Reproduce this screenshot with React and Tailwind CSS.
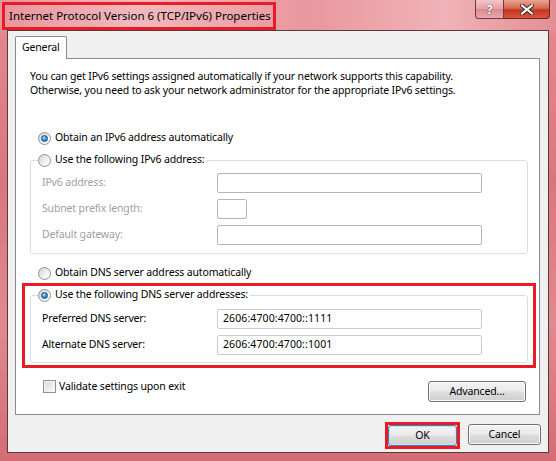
import React from 'react';

const font = { fontFamily: '"Noto Sans", "Liberation Sans", sans-serif' };

const Radio = ({ checked, label, muted }) => (
  <label className="flex items-center h-[14px]">
    <span className="flex items-center justify-center w-[13px] h-[13px] rounded-full border border-[#8e9093] bg-[linear-gradient(135deg,#d4d4d4,#f7f7f7_70%,#ffffff)]">
      {checked && (
        <span className="w-[7px] h-[7px] rounded-full border border-[#1c5180] bg-[radial-gradient(circle_at_40%_35%,#b6e6ff,#2a8ad6_55%,#0f4f8c)]" />
      )}
    </span>
    <span className={`ml-[4px] ${muted ? 'text-[#a0a0a0]' : 'text-black'}`}>{label}</span>
  </label>
);

const Field = ({ label, value, width = 'w-[265px]', disabled }) => (
  <div className="flex items-center h-[20px] ml-[4px]">
    <span className={`w-[175px] ${disabled ? 'text-[#a0a0a0]' : 'text-black'}`}>{label}</span>
    <div className={`${width} h-[20px] rounded-[2px] border ${disabled ? 'border-[#b5b5b5]' : 'border-[#c8cbd0]'} bg-white flex items-center px-[5px] text-black tracking-[0.1px]`}>
      {value}
    </div>
  </div>
);

const Button = ({ children, className = '', primary }) => (
  <button
    className={`h-[21px] rounded-[3px] border ${primary ? 'border-[#3c7fb1] shadow-[inset_0_0_0_1px_#bfe6f8]' : 'border-[#707070] shadow-[inset_0_0_0_1px_#fbfbfb]'} bg-[linear-gradient(#f2f2f2,#ebebeb_48%,#dddddd_52%,#cfcfcf)] text-black flex items-center justify-center ${className}`}
  >
    {children}
  </button>
);

export default function App() {
  return (
    <div
      style={font}
      className="w-[556px] h-[461px] overflow-hidden flex flex-col text-[10.5px] tracking-[-0.15px] bg-[linear-gradient(180deg,#e9a3a9,#e2868d_8%,#d9767d_40%,#df8a90_70%,#d46c73)]"
    >
      {/* title bar */}
      <div className="h-[30px] flex items-start justify-between shrink-0 bg-[linear-gradient(90deg,#e8959c,#f1b9bd_25%,#e8979d_55%,#f0b3b7_80%,#e48d94)]">
        <div className="mt-[2px] ml-[2px] h-[28px] w-[274px] border-[3px] border-[#ea1b25] flex items-center pl-[4px] text-[11.5px] tracking-normal whitespace-nowrap text-black">
          Internet Protocol Version 6 (TCP/IPv6) Properties
        </div>
        <div className="flex mr-[6px]">
          <div className="w-[29px] h-[19px] rounded-bl-[4px] border border-t-0 border-[#6b3c40] bg-[linear-gradient(#f3c5c8,#e3a1a6_50%,#d98a90_51%,#e9a8ad)] flex items-center justify-center">
            <span className="text-white font-bold text-[13px] leading-none [text-shadow:0_0_1px_#3a2a2c,0_0_1px_#3a2a2c]">?</span>
          </div>
          <div className="w-[46px] h-[19px] rounded-br-[4px] border border-l-0 border-t-0 border-[#6b2a24] bg-[linear-gradient(#eaa58f,#d7684f_45%,#c2371f_55%,#d9553c)] flex items-center justify-center">
            <svg width="14" height="11" viewBox="0 0 14 11">
              <path d="M2 1.5 L12 9.5 M12 1.5 L2 9.5" stroke="#3b2b2b" strokeWidth="4" strokeLinecap="square" />
              <path d="M2 1.5 L12 9.5 M12 1.5 L2 9.5" stroke="#ffffff" strokeWidth="2" strokeLinecap="square" />
            </svg>
          </div>
        </div>
      </div>

      {/* client area */}
      <div className="ml-[7px] mr-[7px] h-[423px] border border-[#5b3a3d] bg-[#f0f0f0] flex flex-col px-[7px] pt-[5px]">
        {/* tab */}
        <div className="flex">
          <div className="h-[23px] px-[6px] border border-b-0 border-[#898c95] bg-white flex items-center text-black relative z-10 -mb-[1px] rounded-t-[2px]">
            General
          </div>
        </div>
        <div className="w-[525px] h-[357px] border border-[#898c95] bg-white flex flex-col">
          <div className="ml-[14px] mt-[10px] leading-[14px] text-black">
            <p>You can get IPv6 settings assigned automatically if your network supports this capability.</p>
            <p>Otherwise, you need to ask your network administrator for the appropriate IPv6 settings.</p>
          </div>

          <div className="ml-[22px] mt-[34px]">
            <Radio checked label="Obtain an IPv6 address automatically" />
          </div>

          <fieldset className="block ml-[14px] mt-[8px] w-[498px] border border-[#d5dfe5] rounded-[3px] pl-[7px] pr-0 pb-[8px]">
            <legend className="pr-[2px]">
              <Radio label="Use the following IPv6 address:" />
            </legend>
            <div className="mt-[6px] flex flex-col gap-[6px]">
              <Field disabled label="IPv6 address:" />
              <Field disabled label="Subnet prefix length:" width="w-[30px]" />
              <Field disabled label="Default gateway:" />
            </div>
          </fieldset>

          <div className="ml-[22px] mt-[12px]">
            <Radio label="Obtain DNS server address automatically" />
          </div>

          <div className="ml-[6px] mt-[3px] w-[514px] border-[3px] border-[#ea1b25] px-[5px] pt-[2px] pb-[2px]">
            <fieldset className="block border border-[#d5dfe5] rounded-[3px] pl-[7px] pr-0 pb-[7px]">
              <legend className="pr-[2px]">
                <Radio checked label="Use the following DNS server addresses:" />
              </legend>
              <div className="mt-[7px] flex flex-col gap-[6px]">
                <Field label="Preferred DNS server:" value="2606:4700:4700::1111" />
                <Field label="Alternate DNS server:" value="2606:4700:4700::1001" />
              </div>
            </fieldset>
          </div>

          <div className="flex items-start justify-between ml-[27px] mr-[13px]">
            <label className="flex items-center mt-[11px]">
              <span className="w-[13px] h-[13px] border border-[#8e9093] bg-[linear-gradient(135deg,#d6d6d6,#f2f2f2_70%,#ffffff)] shadow-[inset_0_0_0_1px_#f4f4f4]" />
              <span className="ml-[3px] text-black">Validate settings upon exit</span>
            </label>
            <Button className="w-[98px] mt-[13px]">Advanced...</Button>
          </div>
        </div>

        {/* bottom buttons */}
        <div className="flex items-start justify-end mt-[9px]">
          <div className="border-[3px] border-[#ea1b25] -mt-[2px] flex">
            <Button primary className="w-[69px]">OK</Button>
          </div>
          <Button className="w-[73px] ml-[8px]">Cancel</Button>
        </div>
      </div>
    </div>
  );
}
